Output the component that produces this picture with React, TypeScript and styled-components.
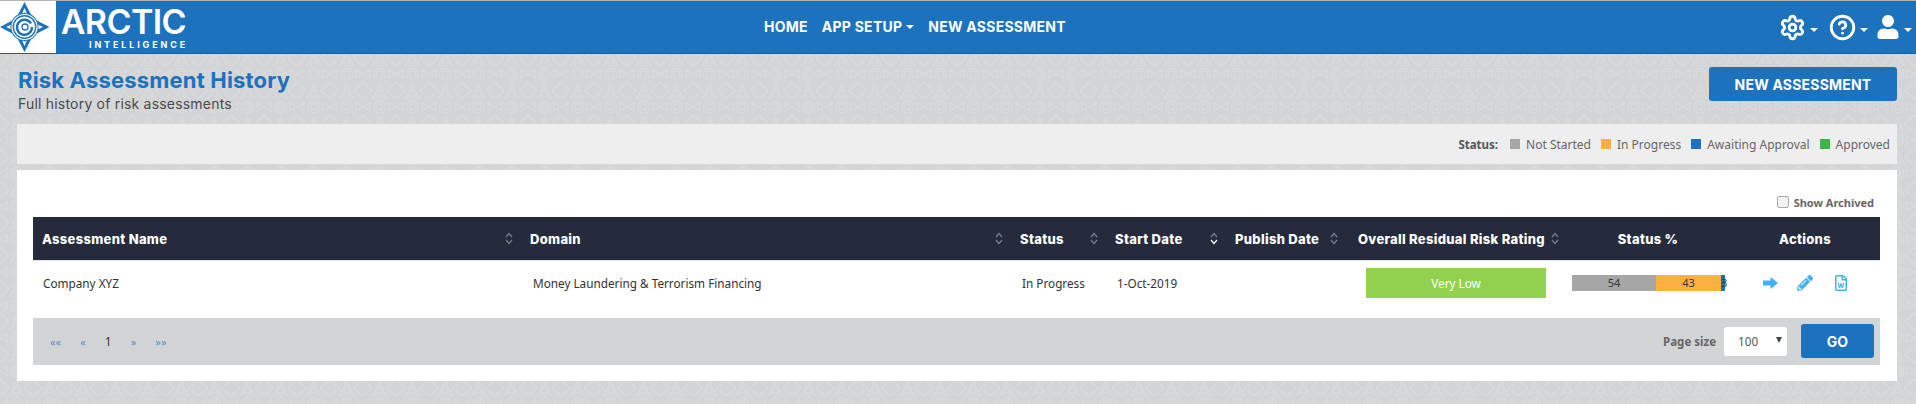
import React from "react";
import styled, { createGlobalStyle } from "styled-components";
import { CircleHelp, Settings } from "lucide-react";
import { FaPencilAlt, FaRegFileWord, FaUser } from "react-icons/fa";

const tile = encodeURIComponent(
  `<svg xmlns="http://www.w3.org/2000/svg" width="33" height="33" viewBox="0 0 33 33"><g fill="none" stroke="#d9dadc" stroke-width="1.3"><circle cx="16.5" cy="8" r="6"/><circle cx="16.5" cy="8" r="3"/><path d="M0 8 7 4v8zM33 8l-7-4v8zM16.5 18l-7 15h14zM16.5 23l-3.500 7h7z"/><path d="M0 16l9 9-9 8M33 16l-9 9 9 8"/></g></svg>`
);

const GlobalStyle = createGlobalStyle`
  html, body {
    margin: 0;
    padding: 0;
  }
  body {
    height: 404px;
    overflow: hidden;
    background-color: #d3d4d6;
    background-image: url("data:image/svg+xml,${tile}");
    font-family: "Noto Sans", "Open Sans", sans-serif;
    font-size: 11.75px;
    color: #333;
  }
`;

const Header = styled.header`
  display: grid;
  grid-template-columns: 764px 1fr auto;
  align-items: center;
  height: 52px;
  border-top: 1px solid #b4b4b4;
  background: #1c72bd;
  box-shadow: 0 1px 0 #1a5f9c;
`;

const Brand = styled.div`
  display: flex;
  align-items: stretch;
  height: 52px;
`;

const LogoBox = styled.div`
  display: flex;
  align-items: center;
  justify-content: flex-start;
  width: 56px;
  background: #fff;
`;

const Wordmark = styled.div`
  display: flex;
  flex-direction: column;
  align-items: flex-end;
  width: 130px;
  padding-top: 3px;
  color: #fff;
  font-family: "Inter", sans-serif;
`;

const WordmarkTop = styled.span`
  font-size: 34px;
  line-height: 36px;
  font-weight: 600;
  letter-spacing: -0.6px;
`;

const WordmarkSub = styled.span`
  font-size: 9px;
  line-height: 10px;
  font-weight: 700;
  letter-spacing: 2.85px;
  margin-right: -2px;
`;

const Nav = styled.nav`
  display: flex;
  align-items: center;
  gap: 14px;
  padding-bottom: 1px;
`;

const NavLink = styled.a`
  display: flex;
  align-items: center;
  color: #fff;
  font-family: "Inter", sans-serif;
  font-size: 14px;
  font-weight: 700;
  letter-spacing: 0.25px;
`;

const Caret = styled.span<{ $size?: number }>`
  display: inline-block;
  width: 0;
  height: 0;
  margin-left: 4px;
  border-left: ${(p) => p.$size ?? 4.5}px solid transparent;
  border-right: ${(p) => p.$size ?? 4.5}px solid transparent;
  border-top: ${(p) => p.$size ?? 4.5}px solid #fff;
`;

const HeaderIcons = styled.div`
  display: flex;
  align-items: center;
  padding-right: 4px;
  color: #fff;
`;

const IconMenu = styled.div<{ $gap: number }>`
  display: flex;
  align-items: center;
  margin-left: ${(p) => p.$gap}px;
  svg {
    display: block;
  }
  ${Caret} {
    margin-top: 6px;
    margin-left: 4px;
  }
`;

const TitleRow = styled.div`
  display: flex;
  justify-content: space-between;
  align-items: flex-start;
  height: 71px;
  padding: 14px 19px 0 18px;
  box-sizing: border-box;
`;

const Title = styled.h1`
  margin: 0;
  color: #1c72bd;
  font-family: "Inter", sans-serif;
  font-size: 22px;
  line-height: 27px;
  font-weight: 700;
  letter-spacing: 0.18px;
`;

const Subtitle = styled.p`
  margin: 0;
  color: #4a4a4a;
  font-family: "Inter", sans-serif;
  font-size: 14px;
  line-height: 20px;
  letter-spacing: 0.2px;
`;

const PrimaryButton = styled.button<{ $wide?: boolean }>`
  width: ${(p) => (p.$wide ? 188 : 73)}px;
  height: 34px;
  border: 0;
  border-radius: 3px;
  background: #1c72bd;
  color: #fff;
  font-family: "Inter", sans-serif;
  font-size: 14px;
  font-weight: 700;
  letter-spacing: 0.2px;
`;

const StatusBar = styled.div`
  display: flex;
  justify-content: flex-end;
  align-items: center;
  height: 40px;
  margin: 0 19px 6px 17px;
  padding-right: 7px;
  background: #eeeeee;
  color: #666;
  font-size: 12px;
`;

const StatusLabel = styled.strong`
  margin-right: 2px;
  color: #555;
  font-size: 11.5px;
`;

const LegendItem = styled.span<{ $color: string }>`
  display: flex;
  align-items: center;
  margin-left: 10px;
  &:before {
    content: "";
    width: 10px;
    height: 10px;
    margin-right: 6px;
    background: ${(p) => p.$color};
  }
`;

const Card = styled.section`
  height: 211px;
  margin: 0 19px 0 17px;
  padding: 26px 17px 0 16px;
  box-sizing: border-box;
  background: #fff;
`;

const ArchivedRow = styled.label`
  display: flex;
  justify-content: flex-end;
  align-items: center;
  gap: 5px;
  height: 12px;
  margin-bottom: 9px;
  padding-right: 6px;
  color: #666;
  font-weight: 700;
  font-size: 11px;
`;

const Checkbox = styled.span`
  width: 10px;
  height: 10px;
  border: 1px solid #aaa;
  border-radius: 2px;
  background: #f2f2f2;
`;

const Table = styled.table`
  width: 100%;
  table-layout: fixed;
  border-collapse: collapse;
`;

const Th = styled.th<{ $center?: boolean; $pad?: number }>`
  height: 43px;
  padding: 0 0 0 ${(p) => p.$pad ?? 9}px;
  border-bottom: 1px solid #e4e4e4;
  background: #252b3c;
  color: #fff;
  font-family: "Inter", sans-serif;
  font-size: 13px;
  font-weight: 800;
  letter-spacing: 0.3px;
  text-align: ${(p) => (p.$center ? "center" : "left")};
`;

const ThInner = styled.div<{ $gap?: boolean }>`
  display: flex;
  justify-content: ${(p) => (p.$gap ? "flex-start" : "space-between")};
  align-items: center;
  gap: 6px;
  padding-right: ${(p) => (p.$gap ? 0 : 8)}px;
`;

const Td = styled.td<{ $left?: number }>`
  box-sizing: border-box;
  height: 57px;
  padding: 0 0 13px ${(p) => p.$left ?? 10}px;
  color: #333;
`;

const RatingBar = styled.div`
  display: flex;
  justify-content: center;
  align-items: center;
  width: 180px;
  height: 30px;
  background: #92d14f;
  color: #fff;
`;

const ProgressBar = styled.div`
  display: flex;
  width: 153px;
  height: 16px;
  font-size: 11px;
  line-height: 16px;
`;

const Segment = styled.div<{ $color: string }>`
  overflow: visible;
  background: ${(p) => p.$color};
  color: #333;
  text-align: center;
  white-space: nowrap;
`;

const Actions = styled.div`
  display: flex;
  align-items: center;
  color: #42b0f5;
`;

const ActionIcon = styled.span<{ $gap: number }>`
  display: flex;
  margin-right: ${(p) => p.$gap}px;
`;

const Toolbar = styled.div`
  display: flex;
  justify-content: space-between;
  align-items: center;
  height: 47px;
  margin-top: 0;
  padding: 0 6px 0 17px;
  background: #d3d4d6;
`;

const Pager = styled.div`
  display: flex;
  align-items: center;
  gap: 19px;
  color: #5e8fca;
  font-size: 11px;
`;

const PageNumber = styled.span`
  color: #333;
  font-size: 12px;
`;

const PageSize = styled.div`
  display: flex;
  align-items: center;
`;

const PageSizeLabel = styled.span`
  margin-right: 8px;
  color: #666;
  font-weight: 700;
  font-size: 11.5px;
`;

const Select = styled.div`
  display: flex;
  justify-content: space-between;
  align-items: center;
  box-sizing: border-box;
  width: 63px;
  height: 29px;
  margin-right: 14px;
  padding: 0 5px 0 14px;
  border-radius: 3px;
  background: #fff;
  color: #555;
  ${Caret} {
    border-top-color: #444;
    border-left-width: 3.5px;
    border-right-width: 3.5px;
    border-top-width: 6px;
    margin-bottom: 2px;
  }
`;

const SortWrap = styled.svg`
  flex: none;
  display: block;
`;

const SortIcon = ({ active }: { active?: boolean }) => (
  <SortWrap width="8" height="13" viewBox="0 0 8 13" fill="none" strokeWidth="1.2">
    <path d="M1 5l3-3.500L7 5" stroke="#7b7f8a" />
    <path d="M1 8l3 3.500L7 8" stroke={active ? "#fff" : "#7b7f8a"} />
  </SortWrap>
);

const ArrowIcon = () => (
  <svg width="15" height="14" viewBox="0 0 15 14" fill="currentColor">
    <path d="M0 4.500h7.500V1L15 7l-7.500 6V9.500H0z" />
  </svg>
);

const Logo = () => (
  <svg width="50" height="50" viewBox="0 0 50 50">
    <path d="M24.500 0 33 16.500 49.500 25 33 33.500 24.500 50 16 33.500 0 25 16 16.500z" fill="#1c72bd" />
    <path d="M24.500 6 28 14h-7zM24.500 44 28 36h-7zM6 25l8-3.500v7zM43 25l-8-3.500v7z" fill="#fff" />
    <path d="M24.500 10 26 13h-3zM24.500 40 26 37h-3zM10 25l3-1.500v3zM39 25l-3-1.500v3z" fill="#1c72bd" />
    <circle cx="24.500" cy="25" r="14" fill="#1c72bd" />
    <circle cx="24.500" cy="25" r="12.500" fill="none" stroke="#fff" strokeWidth="1.200" />
    <circle cx="24.500" cy="25" r="10.500" fill="#fff" />
    <path d="M31 21.500A7.500 7.500 0 1 0 32 25" fill="none" stroke="#1c72bd" strokeWidth="2.400" />
    <circle cx="25" cy="25" r="3" fill="none" stroke="#1c72bd" strokeWidth="1.300" />
  </svg>
);

const App = () => {
  return (
    <>
      <GlobalStyle />
      <Header>
        <Brand>
          <LogoBox>
            <Logo />
          </LogoBox>
          <Wordmark>
            <WordmarkTop>ARCTIC</WordmarkTop>
            <WordmarkSub>INTELLIGENCE</WordmarkSub>
          </Wordmark>
        </Brand>
        <Nav>
          <NavLink>HOME</NavLink>
          <NavLink>
            APP SETUP
            <Caret />
          </NavLink>
          <NavLink>NEW ASSESSMENT</NavLink>
        </Nav>
        <HeaderIcons>
          <IconMenu $gap={0}>
            <Settings size={27} strokeWidth={2.5} />
            <Caret />
          </IconMenu>
          <IconMenu $gap={11}>
            <CircleHelp size={27} strokeWidth={2.5} />
            <Caret />
          </IconMenu>
          <IconMenu $gap={8}>
            <FaUser size={24} />
            <Caret />
          </IconMenu>
        </HeaderIcons>
      </Header>

      <TitleRow>
        <div>
          <Title>Risk Assessment History</Title>
          <Subtitle>Full history of risk assessments</Subtitle>
        </div>
        <PrimaryButton $wide>NEW ASSESSMENT</PrimaryButton>
      </TitleRow>

      <StatusBar>
        <StatusLabel>Status:</StatusLabel>
        <LegendItem $color="#a6a6a6">Not Started</LegendItem>
        <LegendItem $color="#fbb040">In Progress</LegendItem>
        <LegendItem $color="#1c72bd">Awaiting Approval</LegendItem>
        <LegendItem $color="#3fb54a">Approved</LegendItem>
      </StatusBar>

      <Card>
        <ArchivedRow>
          <Checkbox />
          Show Archived
        </ArchivedRow>
        <Table>
          <colgroup>
            <col width="488" />
            <col width="490" />
            <col width="95" />
            <col width="120" />
            <col width="120" />
            <col width="220" />
            <col width="164" />
            <col width="150" />
          </colgroup>
          <thead>
            <tr>
              <Th>
                <ThInner>
                  Assessment Name
                  <SortIcon />
                </ThInner>
              </Th>
              <Th>
                <ThInner>
                  Domain
                  <SortIcon />
                </ThInner>
              </Th>
              <Th>
                <ThInner>
                  Status
                  <SortIcon />
                </ThInner>
              </Th>
              <Th>
                <ThInner>
                  Start Date
                  <SortIcon active />
                </ThInner>
              </Th>
              <Th>
                <ThInner>
                  Publish Date
                  <SortIcon />
                </ThInner>
              </Th>
              <Th $pad={12}>
                <ThInner $gap>
                  Overall Residual Risk Rating
                  <SortIcon />
                </ThInner>
              </Th>
              <Th $center $pad={0}>
                Status %
              </Th>
              <Th $center $pad={0}>
                Actions
              </Th>
            </tr>
          </thead>
          <tbody>
            <tr>
              <Td>Company XYZ</Td>
              <Td $left={12}>Money Laundering &amp; Terrorism Financing</Td>
              <Td $left={11}>In Progress</Td>
              <Td $left={11}>1-Oct-2019</Td>
              <Td />
              <Td $left={20}>
                <RatingBar>Very Low</RatingBar>
              </Td>
              <Td $left={6}>
                <ProgressBar>
                  <Segment $color="#a6a6a6" style={{ width: `${54 * 1.5556}px` }}>
                    54
                  </Segment>
                  <Segment $color="#fbb040" style={{ width: `${43 * 1.5116}px` }}>
                    43
                  </Segment>
                  <Segment $color="#1c72bd" style={{ width: "4px" }}>
                    3
                  </Segment>
                </ProgressBar>
              </Td>
              <Td $left={33}>
                <Actions>
                  <ActionIcon $gap={19}>
                    <ArrowIcon />
                  </ActionIcon>
                  <ActionIcon $gap={20}>
                    <FaPencilAlt size={16} />
                  </ActionIcon>
                  <ActionIcon $gap={0}>
                    <FaRegFileWord size={16} />
                  </ActionIcon>
                </Actions>
              </Td>
            </tr>
          </tbody>
        </Table>
        <Toolbar>
          <Pager>
            <span>««</span>
            <span>«</span>
            <PageNumber>1</PageNumber>
            <span>»</span>
            <span>»»</span>
          </Pager>
          <PageSize>
            <PageSizeLabel>Page size</PageSizeLabel>
            <Select>
              100
              <Caret />
            </Select>
            <PrimaryButton>GO</PrimaryButton>
          </PageSize>
        </Toolbar>
      </Card>
    </>
  );
};

export default App;
